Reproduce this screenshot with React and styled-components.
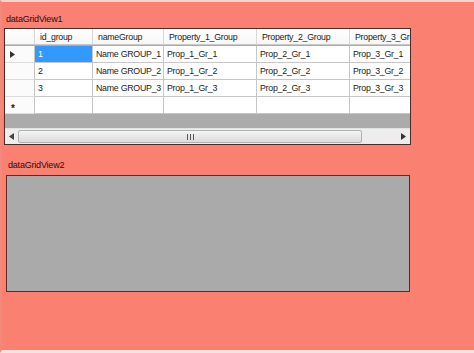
import React from 'react'
import styled, { createGlobalStyle } from 'styled-components'

const GlobalStyle = createGlobalStyle`
  html, body {
    margin: 0;
    padding: 0;
    background: #fa8072;
  }
  body {
    font-family: "Liberation Sans", Arial, sans-serif;
  }
`;

const Form = styled.div`
  width: 474px;
  height: 353px;
  box-sizing: border-box;
  background: #fa8072;
  border-top: 2px solid #f7d4cc;
  border-left: 2px solid #f28a7c;
  border-bottom: 3px solid #f4e4e0;
  padding-left: 2px;
  display: flex;
  flex-direction: column;
`;

const Label = styled.div`
  font-size: 9px;
  letter-spacing: -0.2px;
  color: #241010;
  height: 10px;
  line-height: 10px;
  margin-top: ${p => p.$top}px;
  margin-left: ${p => p.$left}px;
  margin-bottom: ${p => p.$bottom}px;
`;

const GridBox = styled.div`
  width: ${p => p.$width}px;
  height: 117px;
  box-sizing: border-box;
  margin-left: ${p => p.$left}px;
  border: 1px solid #4c2a26;
  background: #ababab;
  overflow: hidden;
  display: flex;
  flex-direction: column;
`;

const Rows = styled.div`
  display: grid;
  grid-template-columns: 30px 58px 71px 93px 93px 64px;
  grid-auto-rows: 17px;
  width: 409px;
`;

const Cell = styled.div`
  box-sizing: border-box;
  border-right: 1px solid #c6c6c6;
  border-bottom: 1px solid #c6c6c6;
  background: ${p => (p.$selected ? '#3399ff' : '#ffffff')};
  color: ${p => (p.$selected ? '#ffffff' : '#1a1a1a')};
  font-size: 8.8px;
  letter-spacing: -0.25px;
  line-height: 16px;
  padding-left: 3px;
  white-space: nowrap;
  overflow: hidden;
`;

const HeaderCell = styled(Cell)`
  height: 16px;
  padding-left: 5px;
  background: linear-gradient(#ffffff, #f7f7f7);
  border-right: 1px solid #d8d8d8;
  border-bottom: 1px solid #c8c8c8;
`;

const RowHead = styled.div`
  box-sizing: border-box;
  border-right: 1px solid #c6c6c6;
  border-bottom: 1px solid #dcdcdc;
  background: #fbfbfb;
  display: flex;
  align-items: center;
  padding-left: 5px;
`;

const NewRowMark = styled.span`
  font-size: 10px;
  font-weight: bold;
  color: #222;
  margin-top: 6px;
  margin-left: 1px;
`;

const Filler = styled.div`
  flex: 1;
  background: #ababab;
`;

const ScrollBar = styled.div`
  height: 16px;
  flex-shrink: 0;
  display: flex;
  align-items: stretch;
  background: #ededed;
  border-top: 1px solid #e2e2e2;
  box-sizing: border-box;
`;

const Arrow = styled.div`
  width: 13px;
  display: flex;
  align-items: center;
  justify-content: center;
`;

const Thumb = styled.div`
  width: 344px;
  margin: 1px 0;
  box-sizing: border-box;
  border: 1px solid #b2b2b2;
  border-radius: 2px;
  background: linear-gradient(#f4f4f4, #dcdcdc);
  display: flex;
  align-items: center;
  justify-content: center;
`;

const Track = styled.div`
  flex: 1;
`;

const EmptyGrid = styled(GridBox)`
  border-color: #5a2c24;
  background: #aaaaaa;
`;

const columns = ['id_group', 'nameGroup', 'Property_1_Group', 'Property_2_Group', 'Property_3_Group']

const data = [1, 2, 3].map(n => [
  String(n),
  `Name GROUP_${n}`,
  `Prop_1_Gr_${n}`,
  `Prop_2_Gr_${n}`,
  `Prop_3_Gr_${n}`,
])

const Triangle = ({ dir }) => (
  <svg width="5" height="7" viewBox="0 0 5 7">
    {dir === 'left'
      ? <polygon points="5,0 0,3.5 5,7" fill="#444" />
      : <polygon points="0,0 5,3.5 0,7" fill="#333" />}
  </svg>
)

const Grip = () => (
  <svg width="7" height="6" viewBox="0 0 7 6">
    <rect x="0" y="0" width="1" height="6" fill="#555" />
    <rect x="3" y="0" width="1" height="6" fill="#555" />
    <rect x="6" y="0" width="1" height="6" fill="#555" />
  </svg>
)

const DataGridView = ({ width, left }) => (
  <GridBox $width={width} $left={left}>
    <Rows>
      <HeaderCell />
      {columns.map(c => <HeaderCell key={c}>{c}</HeaderCell>)}
      {data.map((row, i) => (
        <React.Fragment key={i}>
          <RowHead>{i === 0 && <Triangle dir="right" />}</RowHead>
          {row.map((v, j) => (
            <Cell key={j} $selected={i === 0 && j === 0}>{v}</Cell>
          ))}
        </React.Fragment>
      ))}
      <RowHead><NewRowMark>*</NewRowMark></RowHead>
      {columns.map(c => <Cell key={c} />)}
    </Rows>
    <Filler />
    <ScrollBar>
      <Arrow><Triangle dir="left" /></Arrow>
      <Thumb><Grip /></Thumb>
      <Track />
      <Arrow><Triangle dir="right" /></Arrow>
    </ScrollBar>
  </GridBox>
)

export default function App() {
  return (
    <>
      <GlobalStyle />
      <Form>
        <Label $top={12} $left={2} $bottom={4}>dataGridView1</Label>
        <DataGridView width={407} left={0} />
        <Label $top={15} $left={4} $bottom={5}>dataGridView2</Label>
        <EmptyGrid $width={404} $left={2} />
      </Form>
    </>
  )
}
